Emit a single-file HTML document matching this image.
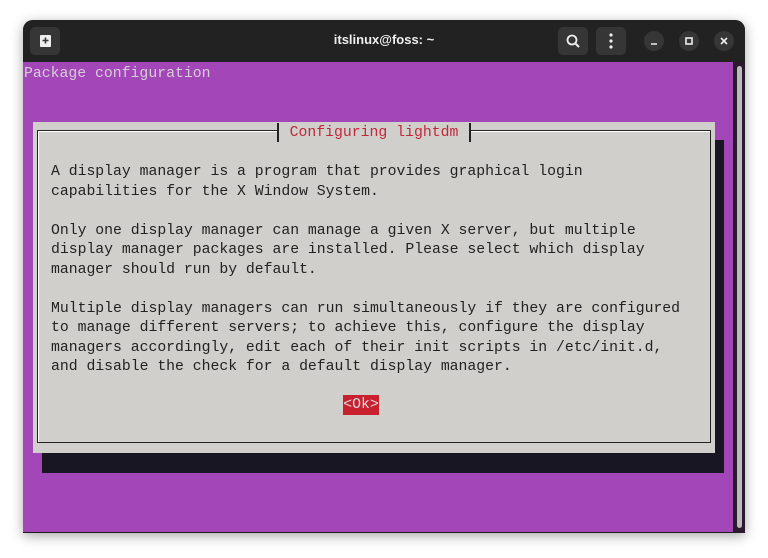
<!DOCTYPE html>
<html><head><style>
body{margin:0;width:768px;height:558px;background:#fff;position:relative;overflow:hidden;font-family:"Liberation Mono",monospace}
.win{position:absolute;left:23px;top:20px;width:722px;height:513px;background:#1e1e1e;border-radius:10px 10px 0 0;box-shadow:0 3px 12px rgba(0,0,0,.35);overflow:hidden}
.tb{position:absolute;left:0;top:0;width:722px;height:42px;background:#222}
.btn{position:absolute;top:7px;width:30px;height:28px;background:#363636;border-radius:5px}
.circ{position:absolute;top:11px;width:20px;height:20px;border-radius:50%;background:#363636}
.title{position:absolute;top:12px;left:0;width:722px;text-align:center;color:#eee;font:bold 13px "Liberation Sans",sans-serif}
.term{position:absolute;left:0;top:42px;width:710px;height:470px;background:#a347b8}
.sb{position:absolute;left:710px;top:42px;width:12px;height:471px;background:#2a1a2e}
.thumb{position:absolute;left:714px;top:46px;width:5px;height:462px;background:#bbb;border-radius:3px}
.pc{position:absolute;left:24px;top:66px;color:#d6cdd8;font-size:14.8px}
.shadow{position:absolute;left:42px;top:140px;width:682px;height:333px;background:#181622}
.dlg{position:absolute;left:33px;top:122px;width:682px;height:331px;background:#d0cfcb}
.inner{position:absolute;left:37px;top:130px;width:672px;height:311px;border:1.5px solid #222;box-shadow:inset 1px 1px 0 #fff}
.ttl{position:absolute;left:277px;top:123px;width:194px;height:19px;background:#d0cfcb;border-left:2px solid #222;border-right:2px solid #222;color:#c0283a;font-size:14.8px;text-align:center;line-height:21px;box-sizing:border-box}
.txt{position:absolute;left:51px;top:163px;color:#222;font-size:14.8px;line-height:19.5px;white-space:pre;letter-spacing:-0.02px}
.ok{position:absolute;left:343px;top:395px;width:36px;height:20px;background:#c8202f;color:#ddd;font-size:14.8px;line-height:21px;text-align:center}
</style></head><body>
<div class="win">
<div class="tb">
<div class="btn" style="left:7px"><svg width="30" height="28"><rect x="10" y="8" width="11" height="12" rx="1" fill="#eee"/><path d="M15.5 10.5v6M12.5 13.5h6" stroke="#363636" stroke-width="1.6"/></svg></div>
<div class="title">itslinux@foss: ~</div>
<div class="btn" style="left:535px"><svg width="30" height="28"><circle cx="14" cy="13" r="4.5" fill="none" stroke="#eee" stroke-width="1.8"/><path d="M17 16l4 4" stroke="#eee" stroke-width="2"/></svg></div>
<div class="btn" style="left:573px"><svg width="30" height="28"><circle cx="15" cy="8" r="1.6" fill="#eee"/><circle cx="15" cy="14" r="1.6" fill="#eee"/><circle cx="15" cy="20" r="1.6" fill="#eee"/></svg></div>
<div class="circ" style="left:621px"><svg width="20" height="20"><path d="M7 13h6" stroke="#eee" stroke-width="1.6"/></svg></div>
<div class="circ" style="left:656px"><svg width="20" height="20"><rect x="7" y="7" width="6" height="6" fill="none" stroke="#eee" stroke-width="1.6"/></svg></div>
<div class="circ" style="left:691px"><svg width="20" height="20"><path d="M7 7l6 6M13 7l-6 6" stroke="#eee" stroke-width="1.6"/></svg></div>
</div>
<div class="term"></div>
<div class="sb"></div><div class="thumb"></div>
</div>
<div class="pc">Package configuration</div>
<div class="shadow"></div>
<div class="dlg"></div>
<div class="inner"></div>
<div class="ttl">Configuring lightdm</div>
<div class="txt">A display manager is a program that provides graphical login
capabilities for the X Window System.

Only one display manager can manage a given X server, but multiple
display manager packages are installed. Please select which display
manager should run by default.

Multiple display managers can run simultaneously if they are configured
to manage different servers; to achieve this, configure the display
managers accordingly, edit each of their init scripts in /etc/init.d,
and disable the check for a default display manager.</div>
<div class="ok">&lt;Ok&gt;</div>
</body></html>
